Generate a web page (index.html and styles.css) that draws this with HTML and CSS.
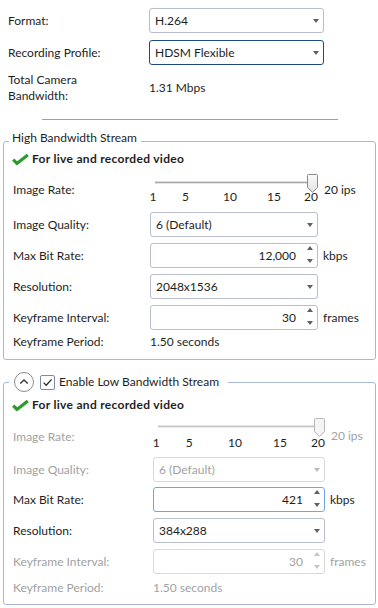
FILE: index.html
```html
<!DOCTYPE html>
<html>
<head>
<meta charset="utf-8">
<link rel="stylesheet" href="styles.css">
</head>
<body>
<div class="top">
  <div class="row">
    <span class="tlbl">Format:</span>
    <div class="combo tw"><span>H.264</span><i class="tri"></i></div>
  </div>
  <div class="row">
    <span class="tlbl">Recording Profile:</span>
    <div class="combo tw focus"><span>HDSM Flexible</span><i class="tri"></i></div>
  </div>
  <div class="row">
    <span class="tlbl">Total Camera<br>Bandwidth:</span>
    <span>1.31 Mbps</span>
  </div>
</div>
<div class="sep"></div>

<fieldset class="grp g1">
  <legend class="lg1">High Bandwidth Stream</legend>
  <div class="grow chkrow">
    <svg class="chk" width="17" height="11" viewBox="0 0 17 11"><path d="M1.2 5.6 L5 9.4 L15.8 1" fill="none" stroke="#2c9a2c" stroke-width="3.2"/></svg>
    <b>For live and recorded video</b>
  </div>
  <div class="grow slrow">
    <span class="glbl sllbl">Image Rate:</span>
    <div class="slider">
      <div class="rail"><span class="track"></span>
        <svg class="thumb" width="11" height="19" viewBox="0 0 11 19"><defs><linearGradient id="tg1" x1="0" y1="0" x2="0" y2="1"><stop offset="0" stop-color="#fbfbfb"/><stop offset="1" stop-color="#e2e2e2"/></linearGradient></defs><path d="M0.5 1.5 Q0.5 0.5 1.5 0.5 H9.5 Q10.5 0.5 10.5 1.5 V13.5 L5.5 18.3 L0.5 13.5 Z" fill="url(#tg1)" stroke="#8a8a8a"/></svg>
      </div>
      <div class="ticks"><span>1</span><span>5</span><span>10</span><span>15</span><span>20</span></div>
    </div>
    <span class="slunit">20 ips</span>
  </div>
  <div class="grow ctl first">
    <span class="glbl">Image Quality:</span>
    <div class="combo gw"><span>6 (Default)</span><i class="tri"></i></div>
  </div>
  <div class="grow ctl">
    <span class="glbl">Max Bit Rate:</span>
    <div class="spin gw"><span class="val">12,000</span><span class="arrows"><i class="up"></i><i class="dn"></i></span></div>
    <span class="unit">kbps</span>
  </div>
  <div class="grow ctl">
    <span class="glbl">Resolution:</span>
    <div class="combo gw"><span>2048x1536</span><i class="tri"></i></div>
  </div>
  <div class="grow ctl">
    <span class="glbl">Keyframe Interval:</span>
    <div class="spin gw"><span class="val">30</span><span class="arrows"><i class="up"></i><i class="dn"></i></span></div>
    <span class="unit">frames</span>
  </div>
  <div class="grow kp">
    <span class="glbl">Keyframe Period:</span>
    <span>1.50 seconds</span>
  </div>
</fieldset>

<fieldset class="grp g2">
  <legend class="lg2"><span class="lgin">
    <span class="expand"><svg width="20" height="20" viewBox="0 0 20 20"><circle cx="10" cy="10" r="9.5" fill="#fff" stroke="#8c8c8c"/><path d="M6.3 11.6 L10 7.9 L13.7 11.6" fill="none" stroke="#3a3a3a" stroke-width="1.4"/></svg></span>
    <span class="cbox"><svg width="15" height="15" viewBox="0 0 15 15"><rect x="0.5" y="0.5" width="14" height="14" rx="1.5" fill="#fff" stroke="#7d8aa8"/><path d="M3.6 7.6 L6.2 10.2 L11.6 4.4" fill="none" stroke="#2b2b2b" stroke-width="1.3"/></svg></span>
    <span class="lgtext">Enable Low Bandwidth Stream</span>
  </span></legend>
  <div class="grow chkrow">
    <svg class="chk" width="17" height="11" viewBox="0 0 17 11"><path d="M1.2 5.6 L5 9.4 L15.8 1" fill="none" stroke="#2c9a2c" stroke-width="3.2"/></svg>
    <b>For live and recorded video</b>
  </div>
  <div class="grow slrow">
    <span class="glbl sllbl dis">Image Rate:</span>
    <div class="slider">
      <div class="rail"><span class="track dtrack"></span>
        <svg class="thumb" width="11" height="19" viewBox="0 0 11 19"><path d="M0.5 1.5 Q0.5 0.5 1.5 0.5 H9.5 Q10.5 0.5 10.5 1.5 V13.5 L5.5 18.3 L0.5 13.5 Z" fill="#f5f5f5" stroke="#b8b8b8"/></svg>
      </div>
      <div class="ticks"><span>1</span><span>5</span><span>10</span><span>15</span><span>20</span></div>
    </div>
    <span class="slunit dis">20 ips</span>
  </div>
  <div class="grow ctl first">
    <span class="glbl dis">Image Quality:</span>
    <div class="combo gw disc"><span>6 (Default)</span><i class="tri"></i></div>
  </div>
  <div class="grow ctl g5">
    <span class="glbl">Max Bit Rate:</span>
    <div class="spin gw hover"><span class="val">421</span><span class="arrows"><i class="up"></i><i class="dn"></i></span></div>
    <span class="unit">kbps</span>
  </div>
  <div class="grow ctl">
    <span class="glbl">Resolution:</span>
    <div class="combo gw"><span>384x288</span><i class="tri"></i></div>
  </div>
  <div class="grow ctl">
    <span class="glbl dis">Keyframe Interval:</span>
    <div class="spin gw disc"><span class="val">30</span><span class="arrows"><i class="up"></i><i class="dn"></i></span></div>
    <span class="unit dis">frames</span>
  </div>
  <div class="grow kp">
    <span class="glbl dis">Keyframe Period:</span>
    <span class="dis">1.50 seconds</span>
  </div>
</fieldset>
</body>
</html>
```

FILE: styles.css
```css
* { box-sizing: border-box; }
html, body { margin: 0; padding: 0; background: #fff; }
body {
  width: 378px;
  height: 608px;
  overflow: hidden;
  font-family: Lato, "Open Sans", sans-serif;
  font-size: 12px;
  line-height: 16px;
  color: #1e1e1e;
}
b { font-weight: 700; letter-spacing: 0.3px; }

.top { padding: 8px 0 0 8px; }
.row { display: flex; align-items: center; }
.row + .row { margin-top: 7px; }
.tlbl { width: 141px; flex: none; }
.tw { width: 175px; }

.combo {
  height: 25px;
  border: 1px solid #b9bdcc;
  border-radius: 3px;
  background: #fff;
  display: flex;
  align-items: center;
  justify-content: space-between;
  padding: 0 4px 0 5px;
}
.combo.focus { border-color: #1d4a86; }
.tri {
  width: 0; height: 0;
  border-left: 3px solid transparent;
  border-right: 3px solid transparent;
  border-top: 4px solid #606060;
}

.sep {
  margin: 15px 0 0 42px;
  width: 296px;
  height: 1px;
  background: #a0a0a0;
}

.grp {
  margin: 10px 0 0 3px;
  width: 373px;
  min-width: 0;
  border: 1px solid #a9b7d6;
  border-radius: 3px;
  padding: 0 0 9px 9px;
}
.lg1 {
  margin-left: -4px;
  padding: 0 4px 7px 3px;
  line-height: 16px;
}
.g2 { margin-top: 12px; padding-bottom: 8px; }
.lg2 { margin-left: -4px; padding: 0 9px 0 5px; }
.lgin { display: flex; align-items: center; height: 20px; }
.expand { display: flex; width: 20px; height: 20px; }
.cbox { display: flex; width: 15px; height: 15px; margin-left: 6px; }
.lgtext { margin-left: 4px; }

.grow { display: flex; align-items: center; }
.chkrow { height: 16px; margin-top: -2px; }
.g2 .chkrow { margin-top: 5px; }
.chk { flex: none; margin-left: -1px; margin-right: 3px; }

.glbl { width: 137px; flex: none; }
.g2 .glbl { width: 140px; }
.gw { width: 168px; flex: none; }
.g2 .gw { width: 172px; }
.dis { color: #a2a2a2; }

.slrow { align-items: flex-start; margin-top: 7px; }
.g2 .slrow { margin-top: 5px; }
.sllbl { margin-top: 7.5px; }
.g2 .sllbl { margin-top: 10.5px; }
.slider { width: 168px; flex: none; display: flex; flex-direction: column; }
.g2 .slider { width: 172px; }
.rail { height: 19px; display: flex; align-items: flex-start; }
.track {
  margin: 8px 0 0 5px;
  width: 158px;
  height: 1px;
  background: #a8a8a8;
  box-shadow: 0 -1px 0 #dedede, 0 1px 0 #e4e4e4;
}
.g2 .track { width: 162px; }
.dtrack { background: #c4c4c4; box-shadow: 0 -1px 0 #e8e8e8, 0 1px 0 #ececec; }
.thumb { flex: none; margin-left: -6px; }
.ticks { display: flex; margin-top: -4px; }
.g2 .ticks { margin-top: -2px; }
.ticks span { width: 16px; flex: none; text-align: center; }
.g1 .ticks span:nth-child(1) { margin-left: -5px; }
.g1 .ticks span:nth-child(2) { margin-left: 16.5px; }
.g1 .ticks span:nth-child(3) { margin-left: 28.5px; }
.g1 .ticks span:nth-child(4) { margin-left: 28px; }
.g1 .ticks span:nth-child(5) { margin-left: 21px; }
.g2 .ticks span:nth-child(1) { margin-left: -4.7px; }
.g2 .ticks span:nth-child(2) { margin-left: 16.9px; }
.g2 .ticks span:nth-child(3) { margin-left: 29.8px; }
.g2 .ticks span:nth-child(4) { margin-left: 29px; }
.g2 .ticks span:nth-child(5) { margin-left: 22px; }
.slunit { margin: 8px 0 0 6px; }
.g2 .slunit { margin-top: 10px; }

.ctl { margin-top: 6px; }
.ctl.first { margin-top: 7px; }
.g2 .ctl.first { margin-top: 6px; }
.g2 .ctl.g5 { margin-top: 5px; }

.spin {
  height: 25px;
  border: 1px solid #b9bdcc;
  border-radius: 3px;
  background: #fff;
  display: flex;
  align-items: center;
  justify-content: flex-end;
  padding-right: 3px;
}
.spin.hover { border-color: #6ea8e4; }
.val { margin-right: 9px; }
.arrows {
  width: 9px;
  height: 23px;
  display: flex;
  flex-direction: column;
  align-items: center;
  justify-content: space-between;
  padding: 2px 0 4px;
}
.up, .dn { width: 0; height: 0; border-left: 3px solid transparent; border-right: 3px solid transparent; }
.up { border-bottom: 4px solid #606060; }
.dn { border-top: 4px solid #606060; }

.disc { border-color: #d9d9d9; color: #a2a2a2; }
.disc .tri { border-top-color: #bdbdbd; }
.disc .up { border-bottom-color: #c4c4c4; }
.disc .dn { border-top-color: #c4c4c4; }

.unit { margin-left: 5px; }
.kp { height: 16px; margin-top: 4px; }
.g2 .kp { margin-top: 6px; }
```
